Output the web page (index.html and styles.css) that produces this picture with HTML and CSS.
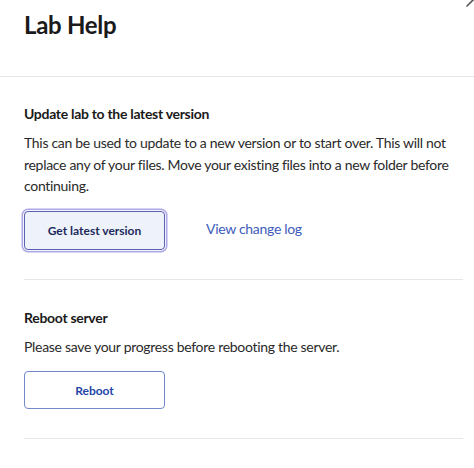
FILE: index.html
```html
<!DOCTYPE html>
<html lang="en">
<head>
<meta charset="utf-8">
<title>Lab Help</title>
<link rel="stylesheet" href="styles.css">
</head>
<body>
<div class="modal">
  <header class="modal-header">
    <h1 class="modal-title">Lab Help</h1>
    <button class="close-btn" aria-label="Close">
      <svg width="10" height="10" viewBox="0 0 10 10"><path d="M1 9 L9 1" stroke="#555" stroke-width="1.6" stroke-linecap="round"/></svg>
    </button>
  </header>
  <div class="modal-body">
    <section class="section">
      <h2 class="section-title">Update lab to the latest version</h2>
      <p class="section-text">This can be used to update to a new version or to start over. This will not replace any of your files. Move your existing files into a new folder before continuing.</p>
      <div class="actions">
        <button class="btn btn-focus">Get latest version</button>
        <a class="link" href="#">View change log</a>
      </div>
    </section>
    <section class="section section-last">
      <h2 class="section-title">Reboot server</h2>
      <p class="section-text">Please save your progress before rebooting the server.</p>
      <div class="actions">
        <button class="btn">Reboot</button>
      </div>
    </section>
  </div>
</div>
</body>
</html>
```

FILE: styles.css
```css
* { box-sizing: border-box; }
html, body { margin: 0; padding: 0; background: #fff; }
body {
  font-family: "Lato", "Liberation Sans", sans-serif;
  color: #1f1f1f;
}
.modal { width: 474px; }
.modal-header {
  position: relative;
  height: 77px;
  padding: 10px 24px 0;
  border-bottom: 1px solid #e6e6e6;
}
.modal-title {
  margin: 0;
  font-size: 24px;
  line-height: 30px;
  font-weight: 700;
  letter-spacing: -0.3px;
  color: #1a1a1a;
}
.close-btn {
  position: absolute;
  top: -3px;
  right: -2px;
  border: 0;
  padding: 0;
  background: none;
  width: 10px;
  height: 10px;
}
.close-btn svg { display: block; }
.modal-body { padding: 0 11px 0 24px; }
.section {
  padding: 27px 0 29px;
  border-bottom: 1px solid #e6e6e6;
}
.section-last { padding-top: 28px; }
.section-title {
  margin: 0 0 8px;
  font-size: 14px;
  line-height: 20px;
  font-weight: 700;
  letter-spacing: -0.3px;
  color: #1a1a1a;
}
.section-text {
  margin: 0;
  font-size: 14px;
  line-height: 21.5px;
  letter-spacing: -0.3px;
  color: #2a2a2a;
}
.actions {
  margin-top: 14px;
  display: flex;
  align-items: center;
  gap: 41px;
}
.btn {
  width: 141px;
  height: 38px;
  border: 1px solid #7389cc;
  border-radius: 4px;
  background: #fff;
  color: #2446a8;
  font-family: inherit;
  font-size: 12px;
  font-weight: 700;
  cursor: pointer;
}
.btn-focus {
  height: 39px;
  background: #eef3fb;
  color: #1c2a5c;
  border: 1.5px solid #5d5fb3;
  box-shadow: 0 0 0 1px #f4f3fd, 0 0 0 2.5px #aba8e3;
}
.link {
  color: #3d5cbb;
  font-size: 14px;
  letter-spacing: -0.3px;
  text-decoration: none;
  margin-top: -3px;
}
```
